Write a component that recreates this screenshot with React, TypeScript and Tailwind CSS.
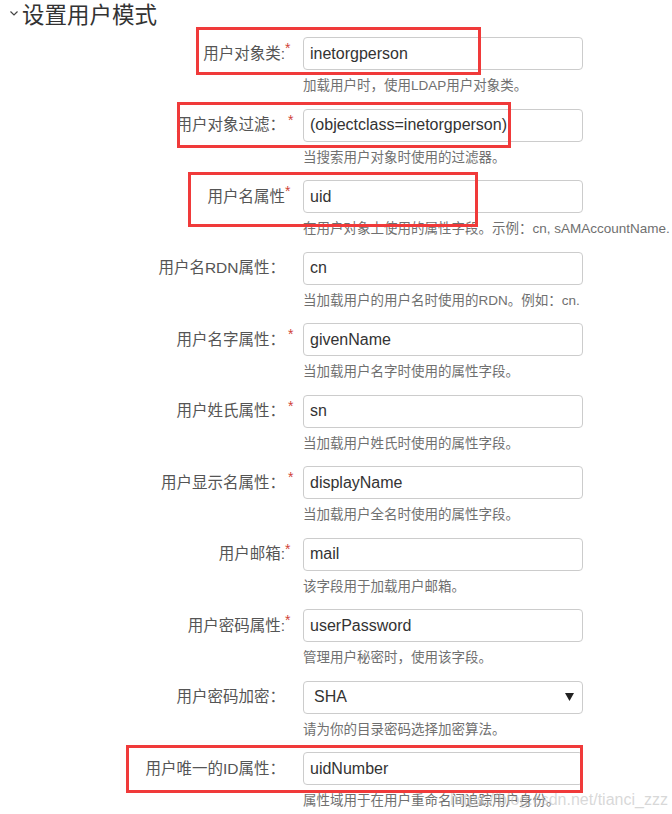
import React from "react";

type Row = {
  label: string;
  req: boolean;
  wide?: boolean;
  value: string;
  help: string;
  select?: boolean;
};

const rows: Row[] = [
  { label: "用户对象类:", req: true, value: "inetorgperson", help: "加载用户时，使用LDAP用户对象类。" },
  { label: "用户对象过滤：", req: true, wide: true, value: "(objectclass=inetorgperson)", help: "当搜索用户对象时使用的过滤器。" },
  { label: "用户名属性", req: true, value: "uid", help: "在用户对象上使用的属性字段。示例：cn, sAMAccountName." },
  { label: "用户名RDN属性：", req: false, value: "cn", help: "当加载用户的用户名时使用的RDN。例如：cn." },
  { label: "用户名字属性：", req: true, wide: true, value: "givenName", help: "当加载用户名字时使用的属性字段。" },
  { label: "用户姓氏属性：", req: true, wide: true, value: "sn", help: "当加载用户姓氏时使用的属性字段。" },
  { label: "用户显示名属性：", req: true, wide: true, value: "displayName", help: "当加载用户全名时使用的属性字段。" },
  { label: "用户邮箱:", req: true, value: "mail", help: "该字段用于加载用户邮箱。" },
  { label: "用户密码属性:", req: true, value: "userPassword", help: "管理用户秘密时，使用该字段。" },
  { label: "用户密码加密：", req: false, value: "SHA", help: "请为你的目录密码选择加密算法。", select: true },
  { label: "用户唯一的ID属性：", req: false, value: "uidNumber", help: "属性域用于在用户重命名间追踪用户身份。" },
];

function FormRow({ r }: { r: Row }) {
  return (
    <div className="flex h-[71.5px]">
      <div className="relative w-[303px] h-[33px] flex items-center justify-end pr-[18px] text-[15.5px] text-[#555] whitespace-nowrap">
        <span>{r.label}</span>
        {r.req && (
          <span
            className={
              "absolute top-[4px] text-[14px] leading-[14px] text-[#d04437] " +
              (r.wide ? "left-[288px]" : "left-[285px]")
            }
          >
            *
          </span>
        )}
      </div>
      <div className="w-[280px] flex flex-col">
        {r.select ? (
          <div className="h-[33px] w-[280px] border border-[#ccc] rounded-[4px] bg-white flex items-center justify-between pl-[10px] pr-[8px] text-[16px] text-[#333]">
            <span>{r.value}</span>
            <svg width="9" height="8" viewBox="0 0 9 8">
              <path d="M0 0 H9 L4.5 8 Z" fill="#222" />
            </svg>
          </div>
        ) : (
          <div className="h-[33px] w-[280px] border border-[#ccc] rounded-[4px] bg-white flex items-center pl-[6px] text-[16px] text-[#333] whitespace-nowrap overflow-hidden">
            {r.value}
          </div>
        )}
        <div className="mt-[7px] text-[13.5px] leading-[18px] text-[#707070] whitespace-nowrap">{r.help}</div>
      </div>
    </div>
  );
}

export default function App() {
  return (
    <div
      className="relative w-[672px] h-[814px] bg-white overflow-hidden"
      style={{ fontFamily: '"Liberation Sans", "Noto Sans CJK SC", sans-serif' }}
    >
      <div className="h-[37px] flex items-start">
        <svg className="ml-[10px] mt-[11px]" width="8" height="5" viewBox="0 0 8 5">
          <path d="M0.5 0.5 L4 4 L7.5 0.5" fill="none" stroke="#444" strokeWidth="1.2" />
        </svg>
        <div className="ml-[4px] text-[22.5px] leading-[32px] text-[#333]">设置用户模式</div>
      </div>
      <div className="flex flex-col">
        {rows.map((r, i) => (
          <FormRow key={i} r={r} />
        ))}
      </div>

      {/* red highlight boxes */}
      <div className="absolute left-[196px] top-[27px] w-[285px] h-[48px] border-[3px] border-[#f03a3a]" />
      <div className="absolute left-[177px] top-[102px] w-[334px] h-[46px] border-[3px] border-[#f03a3a]" />
      <div className="absolute left-[188px] top-[172px] w-[290px] h-[55px] border-[3px] border-[#f03a3a]" />
      <div className="absolute left-[126px] top-[745px] w-[457px] h-[48px] border-[3px] border-[#f03a3a]" />

      {/* watermark */}
      <div className="absolute left-[450px] top-[790px] text-[16px] leading-[20px] text-[rgba(190,190,190,0.6)] whitespace-nowrap">
        https://blog.csdn.net/tianci_zzz
      </div>
    </div>
  );
}
